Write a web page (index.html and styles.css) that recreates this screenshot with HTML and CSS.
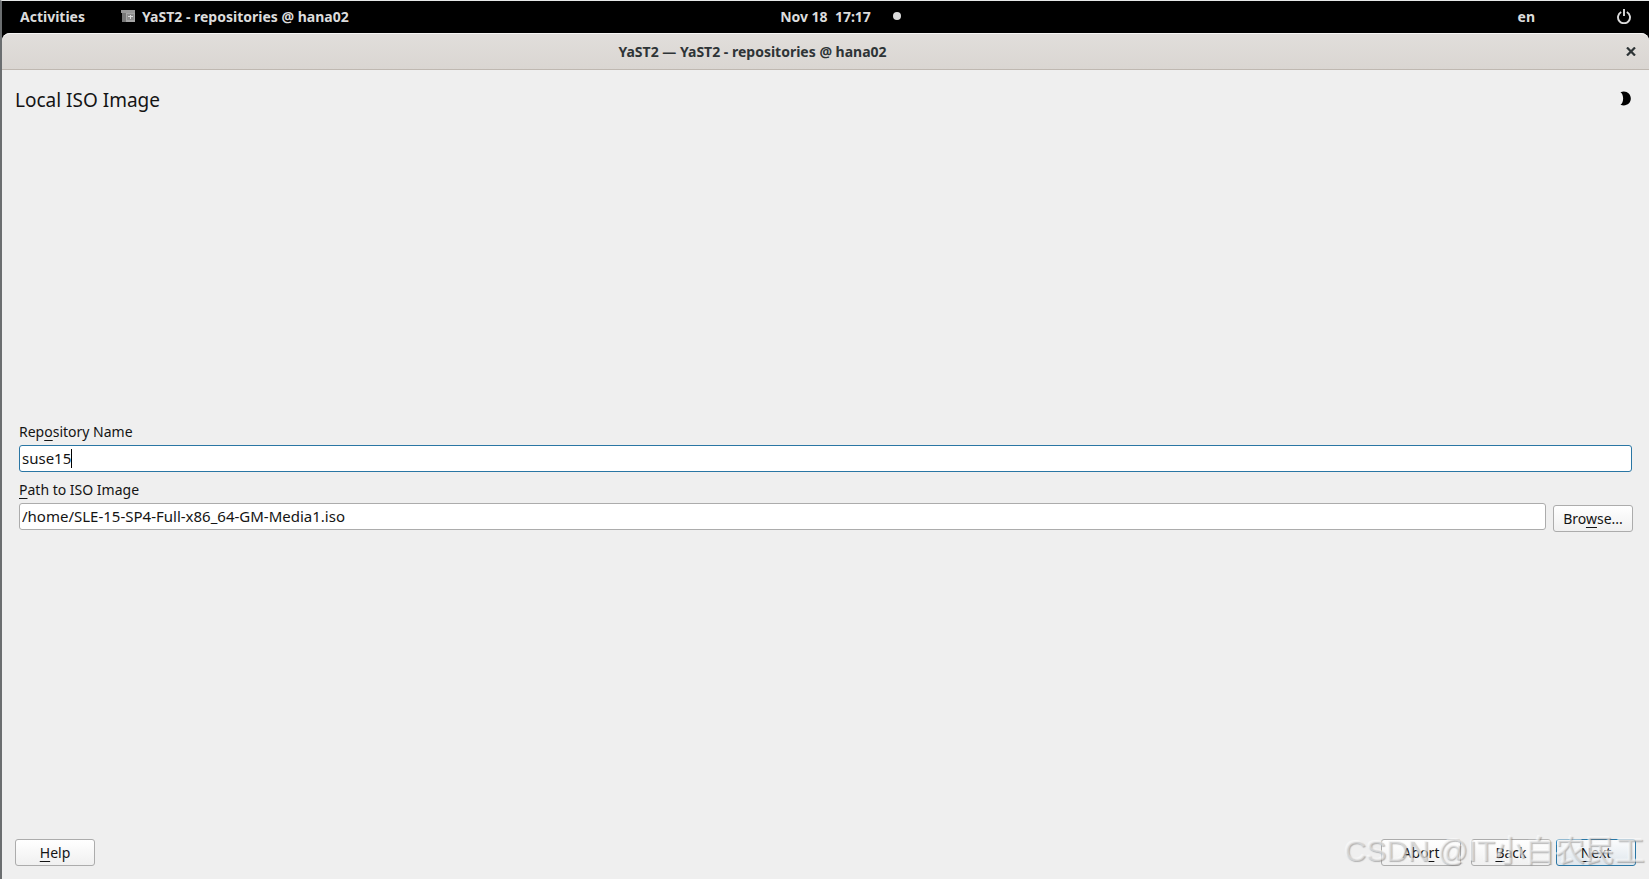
FILE: index.html
```
<!DOCTYPE html>
<html lang="en">

<head>
    <meta charset="UTF-8">
    <meta name="viewport" content="width=device-width, initial-scale=1.0">
    <title>YaST2 - repositories @ hana02</title>
    <link rel="stylesheet" href="styles.css">
</head>
<body>
    <div class="desktop">
        <!-- Top panel -->
        <header class="panel">
            <div class="panel-left">
                <button type="button" class="panel-item">Activities</button>
                <button type="button" class="panel-item app-menu">
                    <svg width="14" height="12" viewBox="0 0 14 12">
                        <path fill="#999" d="M0 0h14v3H0z"/>
                        <path fill="#a6a6a6" d="M1 3h13v9H1z"/>
                        <path fill="#777" d="M1 3h4v9H1z"/>
                        <path fill="#8c8c8c" d="M6 4h7v6H6z"/>
                        <path fill="#ddd" d="M9 5h1v4H9zM7 6h5v1H7z"/>
                    </svg>
                    YaST2 - repositories @ hana02
                </button>
            </div>
            <div class="panel-clock">
                <span class="clock-pad"></span>
                <span>Nov 18&nbsp; 17:17</span>
                <span class="dot"></span>
            </div>
            <div class="panel-right">
                <button type="button" class="panel-item">en</button>
                <button type="button" class="panel-item" aria-label="Power">
                    <svg width="14" height="15" viewBox="0 0 14 15" fill="none" stroke="#dcdcdc" stroke-width="1.9">
                        <path d="M4.2 3A6 6 0 1 0 9.8 3M7 0v7"/>
                    </svg>
                </button>
            </div>
        </header>

        <!-- Window -->
        <main class="window">
            <div class="titlebar">
                <div class="title">YaST2 — YaST2 - repositories @ hana02</div>
                <button type="button" class="close" aria-label="Close">
                    <svg width="10" height="9" viewBox="0 0 10 9" stroke="#2e3436" stroke-width="2.2">
                        <path d="M1 0.5l8 8M9 0.5l-8 8"/>
                    </svg>
                </button>
            </div>

            <div class="heading">
                <h1>Local ISO Image</h1>
                <button type="button" class="theme" aria-label="Switch theme">
                    <svg width="11" height="15" viewBox="0 0 11 15">
                        <path d="M0.5 1.2C6-1 10.8 2.500 10.8 7.500S6 15.800 0.500 13.800C4 11.500 4 3.500 0.500 1.200z"/>
                    </svg>
                </button>
            </div>

            <form class="form">
                <label for="repo_name">Rep<u>o</u>sitory Name</label>
                <div class="field">
                    <input type="text" id="repo_name" name="repo_name" class="active" value="suse15">
                    <span class="caret"></span>
                </div>
                <label for="iso_path"><u>P</u>ath to ISO Image</label>
                <div class="row">
                    <input type="text" id="iso_path" name="iso_path" value="/home/SLE-15-SP4-Full-x86_64-GM-Media1.iso">
                    <button type="button" class="btn browse">Bro<u>w</u>se...</button>
                </div>
            </form>

            <footer class="buttons">
                <button type="button" class="btn"><u>H</u>elp</button>
                <button type="button" class="btn abort">Abo<u>r</u>t</button>
                <button type="button" class="btn back"><u>B</u>ack</button>
                <button type="button" class="btn next"><u>N</u>ext</button>
            </footer>
        </main>
        <div class="watermark">CSDN @IT小白农民工</div>
    </div>
</body>

</html>
```
FILE: styles.css
```
* {
    box-sizing: border-box;
}

body {
    margin: 0;
    background-color: #eef0f0;
    font-family: "Noto Sans", sans-serif;
    font-size: 14px;
    color: #141414;
}

button,
input {
    font: inherit;
    color: inherit;
}

u {
    text-decoration-thickness: 1px;
    text-underline-offset: 3px;
}

.desktop {
    position: relative;
    display: flex;
    flex-direction: column;
    min-height: 100vh;
    border-top: 1px solid #e6e8e8;
    border-left: 2px solid #6b6e70;
    background-color: #000;
}

/* top panel */
.panel {
    display: grid;
    grid-template-columns: 1fr auto 1fr;
    align-items: center;
    height: 32px;
    padding: 0 18px 2px;
    background-color: #000;
    color: #dcdcdc;
    font-weight: 700;
}

.panel-left,
.panel-right,
.panel-clock {
    display: flex;
    align-items: center;
}

.panel-left {
    gap: 36px;
}

.panel-right {
    justify-content: flex-end;
    gap: 82px;
}

.panel-clock {
    gap: 22px;
}

.panel-item {
    display: flex;
    align-items: center;
    padding: 0;
    border: 0;
    background: none;
}

.app-menu {
    gap: 7px;
}

.clock-pad,
.dot {
    width: 8px;
    height: 8px;
}

.dot {
    border-radius: 50%;
    background-color: #dcdcdc;
}

/* window */
.window {
    flex: 1;
    display: flex;
    flex-direction: column;
    border-radius: 8px 8px 0 0;
    background-color: #efefef;
}

.titlebar {
    display: flex;
    align-items: center;
    height: 37px;
    padding-right: 13px;
    border-top: 1px solid #f6f5f4;
    border-bottom: 1px solid #bfb8b1;
    border-radius: 8px 8px 0 0;
    background: linear-gradient(#e1dedb, #dad6d2);
}

.title {
    flex: 1;
    padding-right: 123px;
    text-align: center;
    font-weight: 700;
    color: #2e3436;
}

.close,
.theme {
    display: flex;
    padding: 0;
    border: 0;
    background: none;
}

.heading {
    display: flex;
    justify-content: space-between;
    align-items: center;
    padding: 16px 18px 0 13px;
}

.theme {
    padding-bottom: 4px;
}

h1 {
    margin: 0;
    font-size: 19px;
    font-weight: 400;
    line-height: 28px;
}

.form {
    flex: 1;
    display: flex;
    flex-direction: column;
    justify-content: center;
    padding: 0 16px 0 17px;
}

.form label {
    line-height: 20px;
    padding-bottom: 3px;
}

.form input {
    width: 100%;
    height: 27px;
    padding: 0 2px;
    border: 1px solid #acacac;
    border-radius: 3px;
    background-color: #fff;
    font-size: 15px;
    outline: none;
}

.form .active {
    border-color: #2a76a4;
}

.field {
    position: relative;
    margin-bottom: 8px;
    margin-right: 1px;
}

.caret {
    position: absolute;
    left: 52px;
    top: 4px;
    width: 1px;
    height: 19px;
    background-color: #000;
}

.row {
    display: flex;
    align-items: flex-start;
    gap: 7px;
}

.row input {
    flex: 1;
}

.btn {
    width: 80px;
    height: 27px;
    padding: 0;
    border: 1px solid #acacac;
    border-radius: 3px;
    background: linear-gradient(#fff, #f0f0f0);
}

.browse {
    margin-top: 2px;
}

.buttons {
    display: flex;
    padding: 0 13px;
    margin-bottom: 13px;
}

.abort {
    margin-left: auto;
    margin-right: 10px;
}

.back {
    margin-right: 5px;
}

.next {
    border-color: #2a76a4;
    background: linear-gradient(#fbfcfd, #dfe6ec);
}

.watermark {
    position: absolute;
    right: 4px;
    bottom: 8px;
    font-family: "Liberation Sans", "Noto Sans CJK SC", sans-serif;
    font-size: 30px;
    line-height: 40px;
    white-space: nowrap;
    color: rgba(238, 238, 238, 0.5);
    text-shadow: 1px 1px 1px rgba(120, 120, 120, 0.5), -1px -1px 0 rgba(255, 255, 255, 0.5);
    pointer-events: none;
}
```
